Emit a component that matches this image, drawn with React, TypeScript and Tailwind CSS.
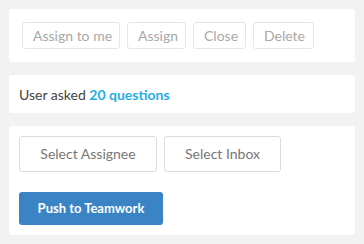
import React from 'react';

const ghost = 'h-[27px] px-[10px] border border-[#e6e6e6] rounded-[3px] bg-white text-[#a8a8a8] text-[14px] leading-none whitespace-nowrap';
const select = 'h-[36px] border border-[#dcdcdc] rounded-[3px] bg-white text-[#777] text-[14px] leading-none whitespace-nowrap';

export default function App() {
  return (
    <div className="w-[364px] h-[244px] bg-[#f2f2f2] p-[9px] flex flex-col gap-[13px]" style={{ fontFamily: 'Lato, "Open Sans", sans-serif' }}>
      <div className="bg-white rounded-[3px] h-[53px] px-[13px] flex items-center gap-[7px]">
        <button className={`${ghost} w-[98px]`}>Assign to me</button>
        <button className={`${ghost} w-[59px]`}>Assign</button>
        <button className={`${ghost} w-[53px]`}>Close</button>
        <button className={`${ghost} w-[61px]`}>Delete</button>
      </div>

      <div className="bg-white rounded-[3px] h-[38px] px-[10px] flex items-center text-[14px] text-[#444] whitespace-nowrap">
        User asked&nbsp;<span className="text-[#1eb0e6] font-bold">20 questions</span>
      </div>

      <div className="bg-white rounded-[3px] h-[109px] px-[10px] pt-[10px] flex flex-col">
        <div className="flex gap-[7px]">
          <button className={`${select} w-[138px]`}>Select Assignee</button>
          <button className={`${select} w-[117px]`}>Select Inbox</button>
        </div>
        <button className="mt-[20px] w-[144px] h-[33px] rounded-[3px] bg-[#3a84c5] text-white text-[13px] font-bold leading-none">
          Push to Teamwork
        </button>
      </div>
    </div>
  );
}
